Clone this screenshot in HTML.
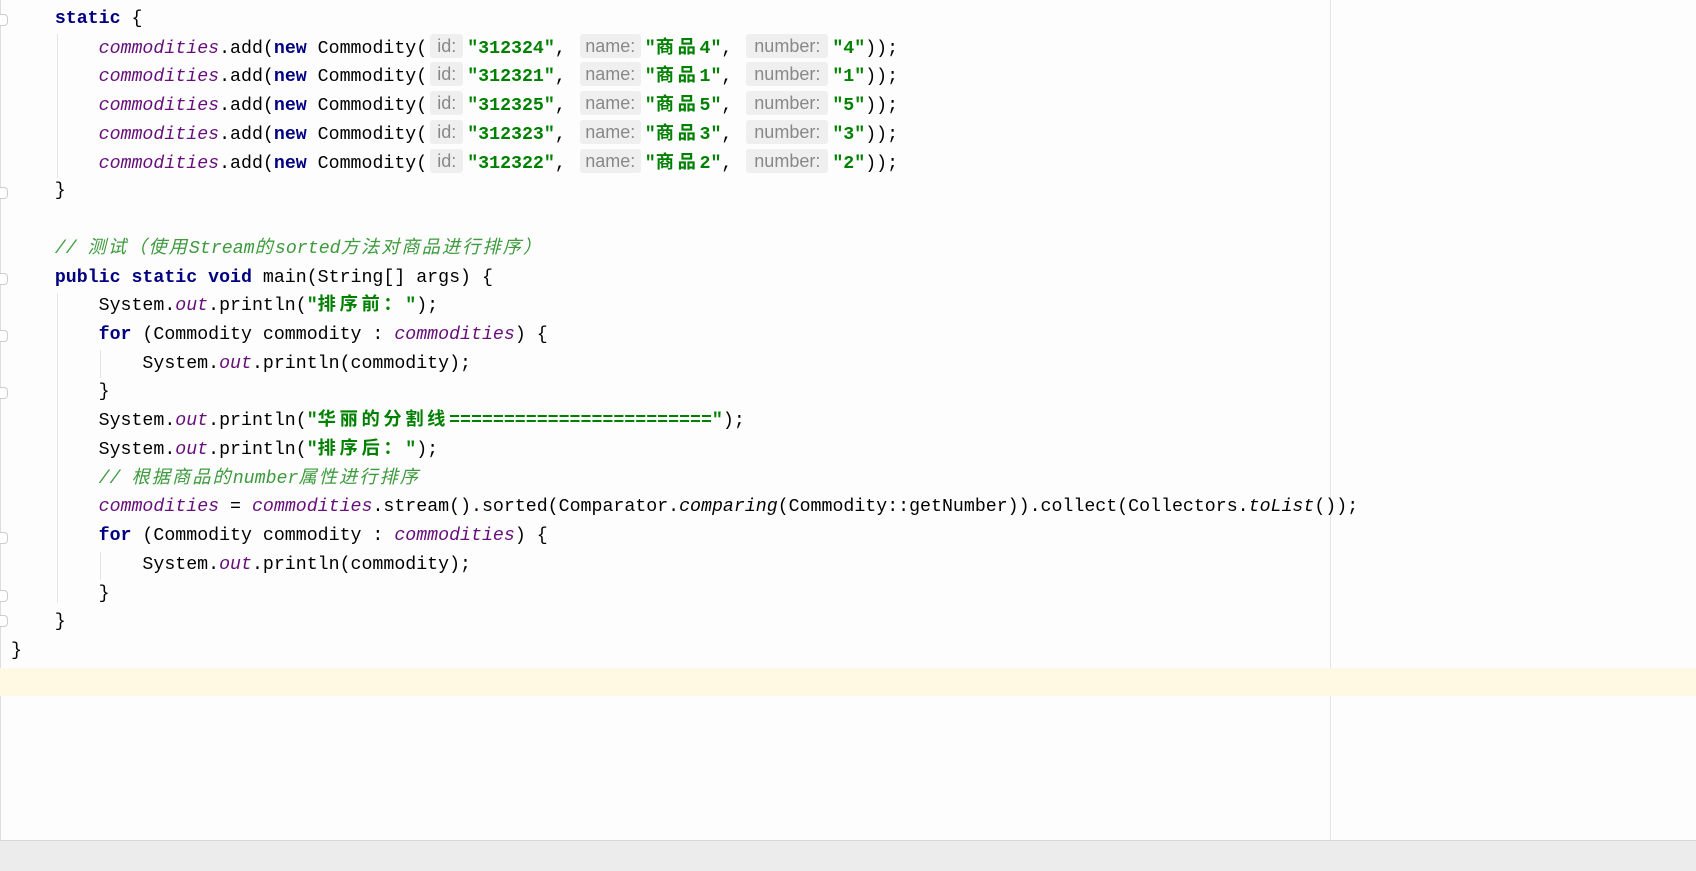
<!DOCTYPE html>
<html><head><meta charset="utf-8"><style>
html,body{margin:0;padding:0;width:1696px;height:870px;overflow:hidden;background:#fdfdfd;}
.l{position:absolute;left:11px;height:29px;line-height:29px;font-family:"Liberation Mono","Noto Sans CJK SC",monospace;font-size:18.25px;color:#000;white-space:pre;}
.k{color:#000080;font-weight:bold}
.s{color:#008000;font-weight:bold}
.f{color:#660e7a;font-style:italic}
.c{color:#3d9a3d;font-style:italic}
.i{font-style:italic}
.z{letter-spacing:3.65px}
.y{letter-spacing:2px}
.h{display:inline-block;box-sizing:border-box;text-align:center;font-family:"Liberation Sans",sans-serif;font-size:18px;color:#888;background:#efefef;border-radius:3px;line-height:24px;height:24px;margin:0 4px 0 3px;vertical-align:1px}
.h1{width:33px}.h2{width:61px}.h3{width:82px}
.g{position:absolute;width:1px;background:#e4e4e4}
.fm{position:absolute;left:0;width:7px;height:10px;border:1px solid #ccc;border-left:none;border-radius:0 4px 4px 0;background:#fff}
</style></head><body>
<div style="position:absolute;left:0;top:0;width:1px;height:840px;background:#ddd"></div>
<div style="position:absolute;left:1330px;top:0;width:1px;height:840px;background:#e6e6e6"></div>
<div style="position:absolute;left:0;top:668px;width:1696px;height:28px;background:#fff8e3"></div>
<div style="position:absolute;left:0;top:840px;width:1696px;height:30px;background:#ececec;border-top:1px solid #d8d8d8"></div>
<div class="g" style="left:57px;top:34px;height:144px"></div>
<div class="g" style="left:57px;top:293px;height:310px"></div>
<div class="g" style="left:100px;top:350px;height:28px"></div>
<div class="g" style="left:100px;top:552px;height:28px"></div>
<div class="fm" style="top:14px"></div><div class="fm" style="top:187px"></div>
<div class="fm" style="top:273px"></div><div class="fm" style="top:330px"></div>
<div class="fm" style="top:387px"></div><div class="fm" style="top:532px"></div>
<div class="fm" style="top:590px"></div><div class="fm" style="top:615px"></div>

<div class="l" style="top:5px">    <span class="k">static</span> {</div>
<div class="l" style="top:34px">        <span class="f">commodities</span>.add(<span class="k">new</span> Commodity(<span class="h h1">id:</span><span class="s">"312324"</span>, <span class="h h2">name:</span><span class="s">"<span class="z">商品</span>4"</span>, <span class="h h3">number:</span><span class="s">"4"</span>));</div>
<div class="l" style="top:62px">        <span class="f">commodities</span>.add(<span class="k">new</span> Commodity(<span class="h h1">id:</span><span class="s">"312321"</span>, <span class="h h2">name:</span><span class="s">"<span class="z">商品</span>1"</span>, <span class="h h3">number:</span><span class="s">"1"</span>));</div>
<div class="l" style="top:91px">        <span class="f">commodities</span>.add(<span class="k">new</span> Commodity(<span class="h h1">id:</span><span class="s">"312325"</span>, <span class="h h2">name:</span><span class="s">"<span class="z">商品</span>5"</span>, <span class="h h3">number:</span><span class="s">"5"</span>));</div>
<div class="l" style="top:120px">        <span class="f">commodities</span>.add(<span class="k">new</span> Commodity(<span class="h h1">id:</span><span class="s">"312323"</span>, <span class="h h2">name:</span><span class="s">"<span class="z">商品</span>3"</span>, <span class="h h3">number:</span><span class="s">"3"</span>));</div>
<div class="l" style="top:149px">        <span class="f">commodities</span>.add(<span class="k">new</span> Commodity(<span class="h h1">id:</span><span class="s">"312322"</span>, <span class="h h2">name:</span><span class="s">"<span class="z">商品</span>2"</span>, <span class="h h3">number:</span><span class="s">"2"</span>));</div>
<div class="l" style="top:177px">    }</div>
<div class="l" style="top:235px">    <span class="c">// <span class="y">测试（使用</span>Stream<span class="y">的</span>sorted<span class="y">方法对商品进行排序）</span></span></div>
<div class="l" style="top:264px">    <span class="k">public static void</span> main(String[] args) {</div>
<div class="l" style="top:292px">        System.<span class="f">out</span>.println(<span class="s">"<span class="z">排序前：</span>"</span>);</div>
<div class="l" style="top:321px">        <span class="k">for</span> (Commodity commodity : <span class="f">commodities</span>) {</div>
<div class="l" style="top:350px">            System.<span class="f">out</span>.println(commodity);</div>
<div class="l" style="top:378px">        }</div>
<div class="l" style="top:407px">        System.<span class="f">out</span>.println(<span class="s">"<span class="z">华丽的分割线</span>========================"</span>);</div>
<div class="l" style="top:436px">        System.<span class="f">out</span>.println(<span class="s">"<span class="z">排序后：</span>"</span>);</div>
<div class="l" style="top:465px">        <span class="c">// <span class="y">根据商品的</span>number<span class="y">属性进行排序</span></span></div>
<div class="l" style="top:493px">        <span class="f">commodities</span> = <span class="f">commodities</span>.stream().sorted(Comparator.<span class="i">comparing</span>(Commodity::getNumber)).collect(Collectors.<span class="i">toList</span>());</div>
<div class="l" style="top:522px">        <span class="k">for</span> (Commodity commodity : <span class="f">commodities</span>) {</div>
<div class="l" style="top:551px">            System.<span class="f">out</span>.println(commodity);</div>
<div class="l" style="top:580px">        }</div>
<div class="l" style="top:608px">    }</div>
<div class="l" style="top:637px">}</div>
</body></html>
